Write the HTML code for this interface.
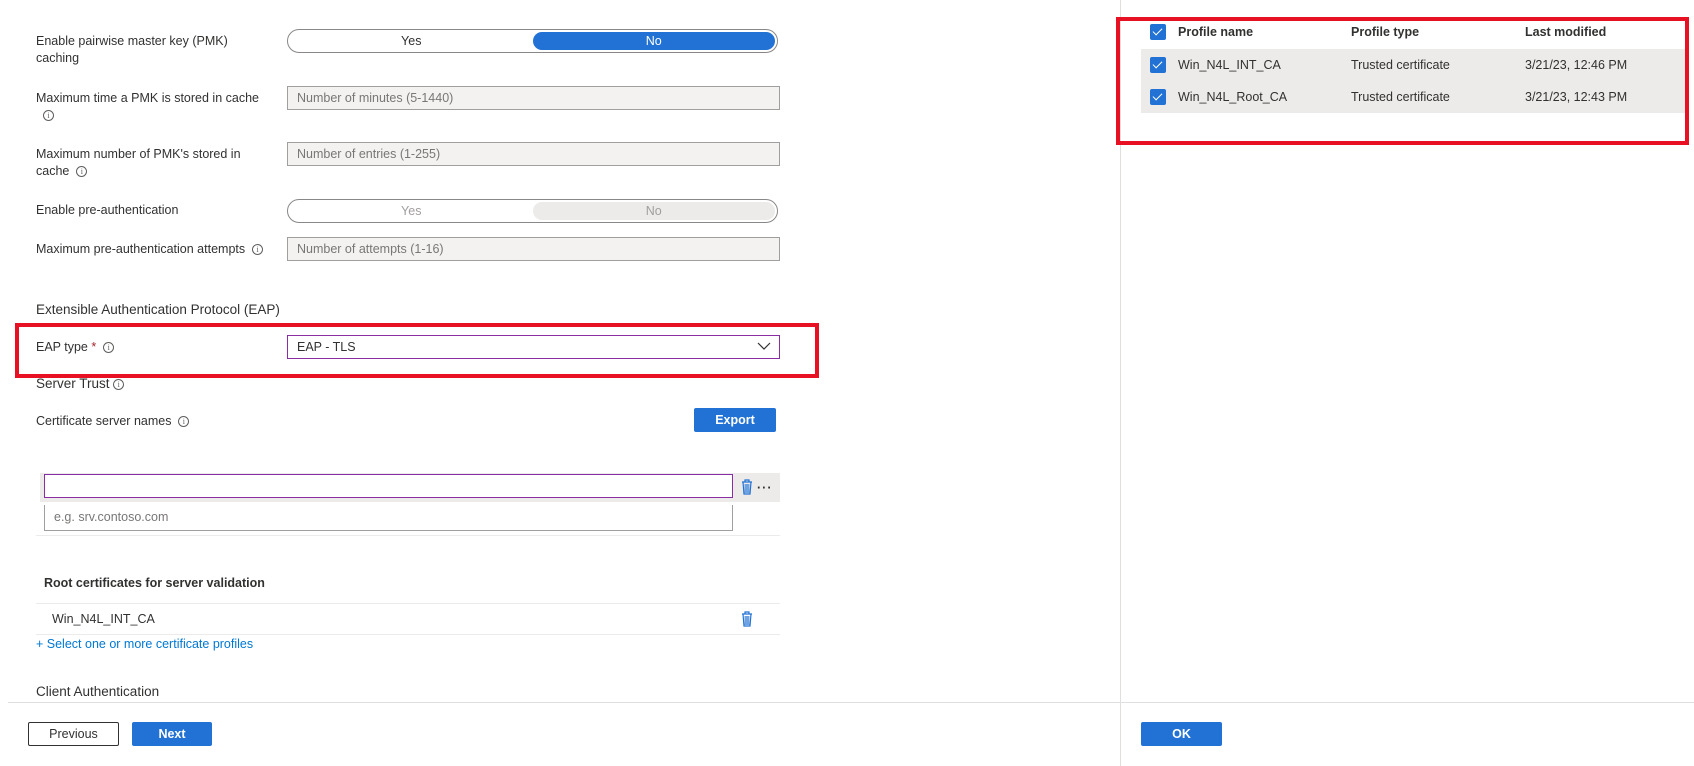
<!DOCTYPE html>
<html><head><meta charset="utf-8"><style>
*{box-sizing:border-box;margin:0;padding:0}
body{width:1694px;height:766px;background:#fff;font-family:"Liberation Sans",sans-serif;font-size:12.5px;color:#323130;position:relative;overflow:hidden}
.a{position:absolute;white-space:nowrap}
.inp{position:absolute;background:#f3f2f1;border:1px solid #a19f9d;color:#797775;padding-left:9px;line-height:22px;font-size:12.5px}
.tog{position:absolute;border:1px solid #8a8886;border-radius:12px;display:flex;overflow:hidden;padding:2px}
.tog div{flex:1;text-align:center;line-height:18px;border-radius:10px}
.info{display:inline-block;width:11px;height:11px;border:1px solid #605e5c;border-radius:50%;font-size:8px;line-height:9px;text-align:center;color:#605e5c;vertical-align:middle;font-family:"Liberation Serif",serif}
.red{position:absolute;border:4px solid #e81123}
.cb{position:absolute;width:16px;height:16px;background:#2172d4;border-radius:2px}
.cb:after{content:"";position:absolute;left:5px;top:2px;width:4px;height:8px;border:solid #fff;border-width:0 1.3px 1.3px 0;transform:rotate(45deg)}
.btn{position:absolute;text-align:center;font-weight:bold;line-height:24px;font-size:12.5px}
</style></head><body>
<div class="a" style="left:36px;top:33px;line-height:17px">Enable pairwise master key (PMK)<br>caching</div>
<div class="tog" style="left:287px;top:29px;width:491px;height:24px"><div>Yes</div><div style="background:#2172d4;color:#fff">No</div></div>
<div class="a" style="left:36px;top:90px;line-height:17px">Maximum time a PMK is stored in cache<br>&nbsp;&nbsp;<span class="info">i</span></div>
<div class="inp" style="left:287px;top:86px;width:493px;height:24px">Number of minutes (5-1440)</div>
<div class="a" style="left:36px;top:146px;line-height:17px">Maximum number of PMK's stored in<br>cache &nbsp;<span class="info">i</span></div>
<div class="inp" style="left:287px;top:142px;width:493px;height:24px">Number of entries (1-255)</div>
<div class="a" style="left:36px;top:203px">Enable pre-authentication</div>
<div class="tog" style="left:287px;top:199px;width:491px;height:24px;color:#a19f9d"><div>Yes</div><div style="background:#edebe9">No</div></div>
<div class="a" style="left:36px;top:242px">Maximum pre-authentication attempts &nbsp;<span class="info">i</span></div>
<div class="inp" style="left:287px;top:237px;width:493px;height:24px">Number of attempts (1-16)</div>
<div class="a" style="left:36px;top:302px;font-size:13.5px">Extensible Authentication Protocol (EAP)</div>
<div class="red" style="left:15px;top:323px;width:804px;height:55px"></div>
<div class="a" style="left:36px;top:340px">EAP type <span style="color:#a4262c">*</span> &nbsp;<span class="info">i</span></div>
<div class="a" style="left:287px;top:335px;width:493px;height:24px;border:1px solid #8a2da5;padding-left:9px;line-height:22px;color:#323130">EAP - TLS<svg style="position:absolute;right:8px;top:6px" width="14" height="9" viewBox="0 0 14 9"><path d="M1 1l6 6 6-6" stroke="#323130" fill="none" stroke-width="1.2"/></svg></div>
<div class="a" style="left:36px;top:376px;font-size:13.5px">Server Trust <span class="info">i</span></div>
<div class="a" style="left:36px;top:414px">Certificate server names &nbsp;<span class="info">i</span></div>
<div class="btn" style="left:694px;top:408px;width:82px;height:24px;background:#2172d4;color:#fff;border-radius:2px">Export</div>
<div class="a" style="left:40px;top:473px;width:740px;height:29px;background:#edebe9"></div>
<div class="a" style="left:44px;top:474px;width:689px;height:24px;background:#fff;border:1px solid #8a2da5"></div>
<svg class="a" style="left:741px;top:479px" width="12" height="16" viewBox="0 0 12 16"><path d="M1 3h10M4 3V1h4v2M2 3l1 12h6l1-12" stroke="#2172d4" fill="none" stroke-width="1.2"/><rect x="3.5" y="5" width="5" height="9" fill="#6ea3e3"/></svg>
<div class="a" style="left:757px;top:481px;font-weight:bold;letter-spacing:1px">···</div>
<div class="inp" style="left:44px;top:505px;width:689px;height:26px;background:#fff;border-top:none;line-height:24px">e.g. srv.contoso.com</div>
<div class="a" style="left:36px;top:535px;width:744px;height:1px;background:#edebe9"></div>
<div class="a" style="left:44px;top:576px;font-weight:bold">Root certificates for server validation</div>
<div class="a" style="left:36px;top:603px;width:744px;height:1px;background:#edebe9"></div>
<div class="a" style="left:52px;top:612px">Win_N4L_INT_CA</div>
<svg class="a" style="left:741px;top:611px" width="12" height="16" viewBox="0 0 12 16"><path d="M1 3h10M4 3V1h4v2M2 3l1 12h6l1-12" stroke="#2172d4" fill="none" stroke-width="1.2"/><rect x="3.5" y="5" width="5" height="9" fill="#6ea3e3"/></svg>
<div class="a" style="left:36px;top:634px;width:744px;height:1px;background:#edebe9"></div>
<div class="a" style="left:36px;top:637px;color:#0078d4">+ Select one or more certificate profiles</div>
<div class="a" style="left:36px;top:684px;font-size:13.5px">Client Authentication</div>
<div class="a" style="left:8px;top:702px;width:1112px;height:1px;background:#e1dfdd"></div>
<div class="btn" style="left:28px;top:722px;width:91px;height:24px;border:1px solid #323130;font-weight:normal;border-radius:2px;line-height:22px">Previous</div>
<div class="btn" style="left:132px;top:722px;width:80px;height:24px;background:#2172d4;color:#fff;border-radius:2px">Next</div>
<div class="a" style="left:1120px;top:0;width:1px;height:766px;background:#e1dfdd"></div>
<div class="a" style="left:1121px;top:702px;width:573px;height:1px;background:#e1dfdd"></div>
<div class="red" style="left:1116px;top:17px;width:573px;height:128px"></div>
<div class="cb" style="left:1150px;top:24px"></div>
<div class="a" style="left:1178px;top:25px;font-weight:bold">Profile name</div>
<div class="a" style="left:1351px;top:25px;font-weight:bold">Profile type</div>
<div class="a" style="left:1525px;top:25px;font-weight:bold">Last modified</div>
<div class="a" style="left:1141px;top:49px;width:544px;height:64px;background:#edebe9"></div>
<div class="cb" style="left:1150px;top:57px"></div>
<div class="a" style="left:1178px;top:58px">Win_N4L_INT_CA</div>
<div class="a" style="left:1351px;top:58px">Trusted certificate</div>
<div class="a" style="left:1525px;top:58px">3/21/23, 12:46 PM</div>
<div class="cb" style="left:1150px;top:89px"></div>
<div class="a" style="left:1178px;top:90px">Win_N4L_Root_CA</div>
<div class="a" style="left:1351px;top:90px">Trusted certificate</div>
<div class="a" style="left:1525px;top:90px">3/21/23, 12:43 PM</div>
<div class="btn" style="left:1141px;top:722px;width:81px;height:24px;background:#2172d4;color:#fff;border-radius:2px">OK</div>
</body></html>
